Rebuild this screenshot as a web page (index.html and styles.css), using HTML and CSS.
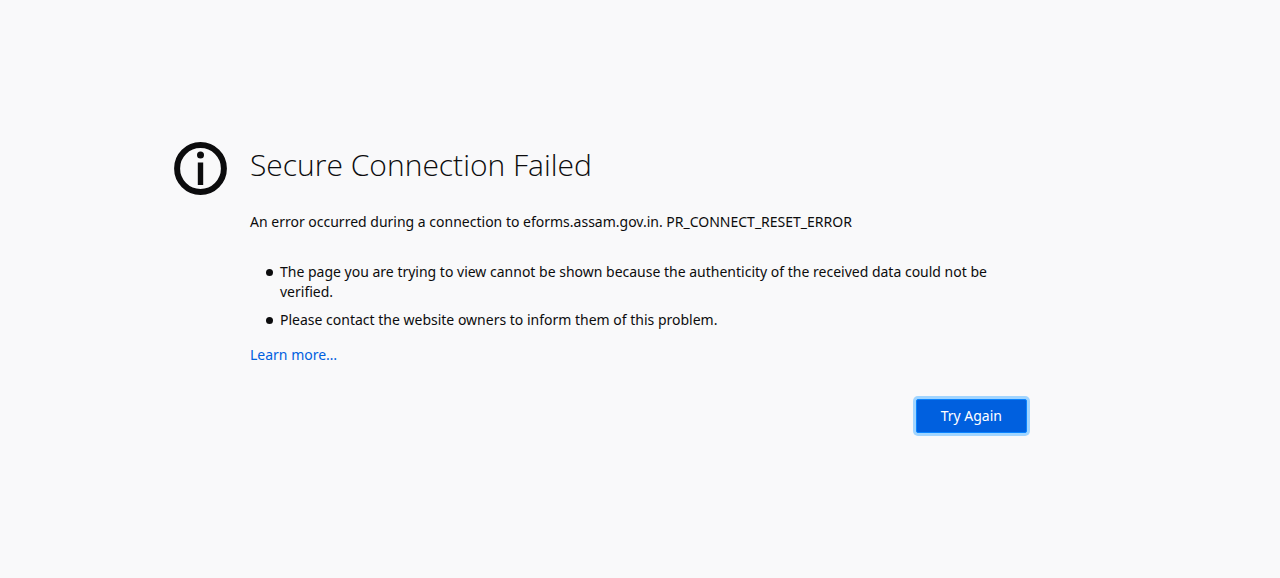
FILE: index.html
```html
<!DOCTYPE html>
<html lang="en">
<head>
  <meta charset="UTF-8">
  <meta name="viewport" content="width=device-width, initial-scale=1.0">
  <title>Secure Connection Failed</title>
  <link rel="stylesheet" href="styles.css">
</head>
<body>
  <main class="container">
    <svg class="info-icon" viewBox="0 0 53 53" aria-hidden="true">
      <circle cx="26.5" cy="26.5" r="23.4" fill="none" stroke="#0c0c0d" stroke-width="6"/>
      <circle cx="26.5" cy="13" r="3.5" fill="#0c0c0d"/>
      <rect x="23.8" y="20.5" width="5.4" height="22.5" fill="#0c0c0d"/>
    </svg>

    <div class="content">
      <h1 class="title">Secure Connection Failed</h1>
      <p class="description">An error occurred during a connection to eforms.assam.gov.in. PR_CONNECT_RESET_ERROR</p>
      <ul class="reasons">
        <li>The page you are trying to view cannot be shown because the authenticity of the received data could not be verified.</li>
        <li>Please contact the website owners to inform them of this problem.</li>
      </ul>
      <a class="learn-more" href="#">Learn more…</a>

      <div class="button-container">
        <button class="try-again" type="button">Try Again</button>
      </div>
    </div>
  </main>
</body>
</html>
```
FILE: styles.css
```css
* {
  box-sizing: border-box;
}
body {
  display: flex;
  align-items: center;
  justify-content: center;
  min-height: 100vh;
  margin: 0;
  padding: 0 48px 4px;
  background-color: #f9f9fa;
  color: #0c0c0d;
  font-family: "Noto Sans", "Open Sans", sans-serif;
  font-size: 14px;
  line-height: 20px;
}
/* Right padding balances the icon so the text block stays centered */
.container {
  display: flex;
  gap: 23px;
  width: 100%;
  max-width: 932px;
  padding-right: 79px;
}
.info-icon {
  flex: none;
  width: 53px;
  height: 53px;
}
.content {
  flex: 1;
}
.title {
  margin: 0 0 24px;
  font-family: "Open Sans", sans-serif;
  font-size: 30px;
  font-weight: 300;
  line-height: 46px;
}
.description {
  margin: 0 0 30px;
}
.reasons {
  margin: 0 0 15px;
  padding-left: 16px;
  list-style: none;
}
.reasons li {
  display: flex;
  gap: 7px;
  margin-bottom: 8px;
}
.reasons li::before {
  content: "";
  flex: none;
  width: 7px;
  height: 7px;
  margin-top: 7px;
  border-radius: 50%;
  background-color: #0c0c0d;
}
.learn-more {
  color: #0060df;
  text-decoration: none;
}
.button-container {
  display: flex;
  justify-content: flex-end;
  margin-top: 34px;
}
.try-again {
  min-width: 111px;
  height: 34px;
  padding: 0 24px;
  border: 1px solid #0a84ff;
  border-radius: 2px;
  background-color: #0060df;
  color: #fff;
  font: inherit;
  box-shadow: 0 0 0 3px #a1d5ff;
  cursor: pointer;
}
.try-again:hover {
  background-color: #003eaa;
}
```
